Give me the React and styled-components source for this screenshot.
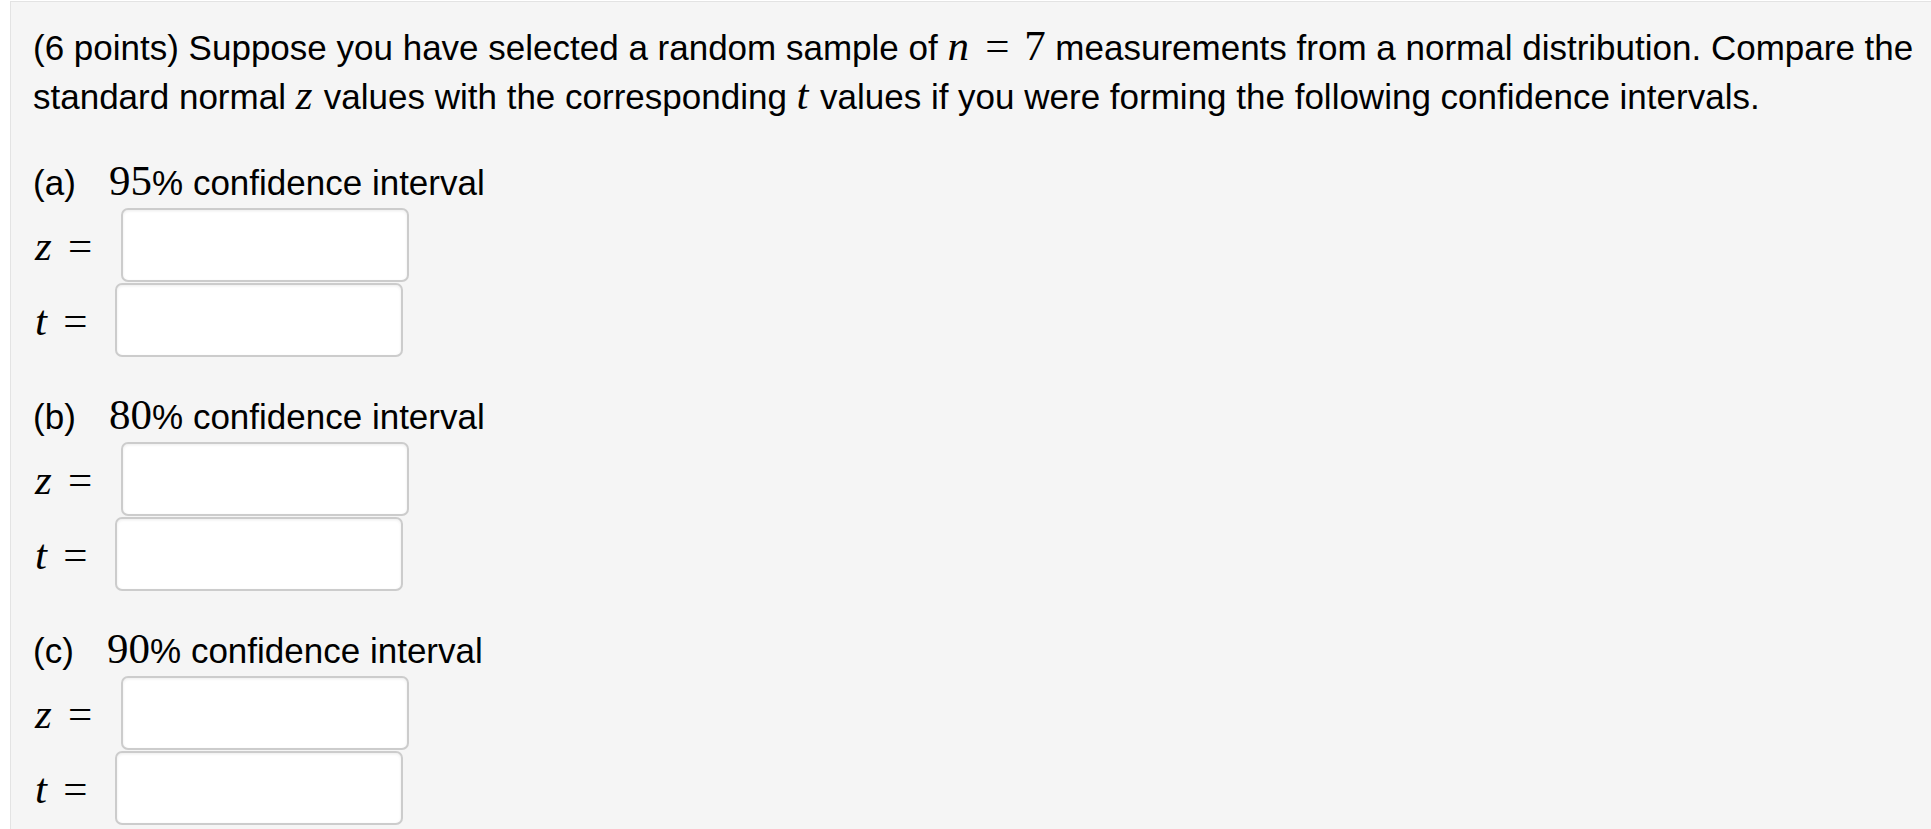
import React from 'react'
import styled, { createGlobalStyle } from 'styled-components'

const GlobalStyle = createGlobalStyle`
  html, body {
    margin: 0;
    padding: 0;
    background: #ffffff;
  }
`

const Page = styled.div`
  padding: 1px 0 0 10px;
  font-family: "Liberation Sans", Arial, sans-serif;
  color: #000;
`

const Panel = styled.div`
  background: #f5f5f5;
  border-top: 1px solid #e3e3e3;
  border-left: 1px solid #e3e3e3;
  padding: 21px 0 40px 22px;
  font-size: 35px;
  line-height: 49px;
  min-height: 900px;
`

const Intro = styled.p`
  margin: 0 0 37px 0;
  white-space: nowrap;
`

const Mi = styled.span`
  font-family: "Liberation Serif", "Times New Roman", serif;
  font-style: italic;
  font-size: 43px;
  line-height: 1;
  padding-right: 0.04em;
`

const Mn = styled.span`
  font-family: "Liberation Serif", "Times New Roman", serif;
  font-size: 43px;
  line-height: 1;
`

const Mo = styled.span`
  font-family: "Liberation Serif", "Times New Roman", serif;
  font-size: 43px;
  line-height: 1;
  margin: 0 0.34em;
`

const Part = styled.section`
  margin-bottom: 35px;
`

const PartTitle = styled.div`
  white-space: nowrap;
`

const Lead = styled.span`
  margin-right: 0.95em;
`

const AnswerRow = styled.div`
  display: flex;
  align-items: center;
  height: ${({ $height }) => $height}px;
`

const Label = styled.span`
  display: inline-flex;
  align-items: center;
  width: ${({ $width }) => $width}px;
  padding-left: 2px;
  flex-shrink: 0;
`

const AnswerInput = styled.input`
  box-sizing: border-box;
  width: 288px;
  height: 74px;
  border: 2px solid #cccccc;
  border-radius: 7px;
  background: #ffffff;
  box-shadow: inset 0 1px 3px rgba(0, 0, 0, 0.08);
  font-size: 30px;
  padding: 0 10px;
  outline: none;
`

const parts = [
  { key: 'a', pct: '95' },
  { key: 'b', pct: '80' },
  { key: 'c', pct: '90' },
]

export default function App() {
  return (
    <>
      <GlobalStyle />
      <Page>
        <Panel>
          <Intro>
            (6 points) Suppose you have selected a random sample of <Mi>n</Mi>
            <Mo>=</Mo>
            <Mn>7</Mn> measurements from a normal distribution. Compare the
            <br />
            standard normal <Mi>z</Mi> values with the corresponding <Mi>t</Mi> values
            if you were forming the following confidence intervals.
          </Intro>
          {parts.map(part => (
            <Part key={part.key}>
              <PartTitle>
                <Lead>({part.key})</Lead>
                <Mn>{part.pct}</Mn>% confidence interval
              </PartTitle>
              <AnswerRow $height={76}>
                <Label $width={86}>
                  <Mi>z</Mi>
                  <Mo>=</Mo>
                </Label>
                <AnswerInput type="text" />
              </AnswerRow>
              <AnswerRow $height={74}>
                <Label $width={80}>
                  <Mi>t</Mi>
                  <Mo>=</Mo>
                </Label>
                <AnswerInput type="text" />
              </AnswerRow>
            </Part>
          ))}
        </Panel>
      </Page>
    </>
  )
}
